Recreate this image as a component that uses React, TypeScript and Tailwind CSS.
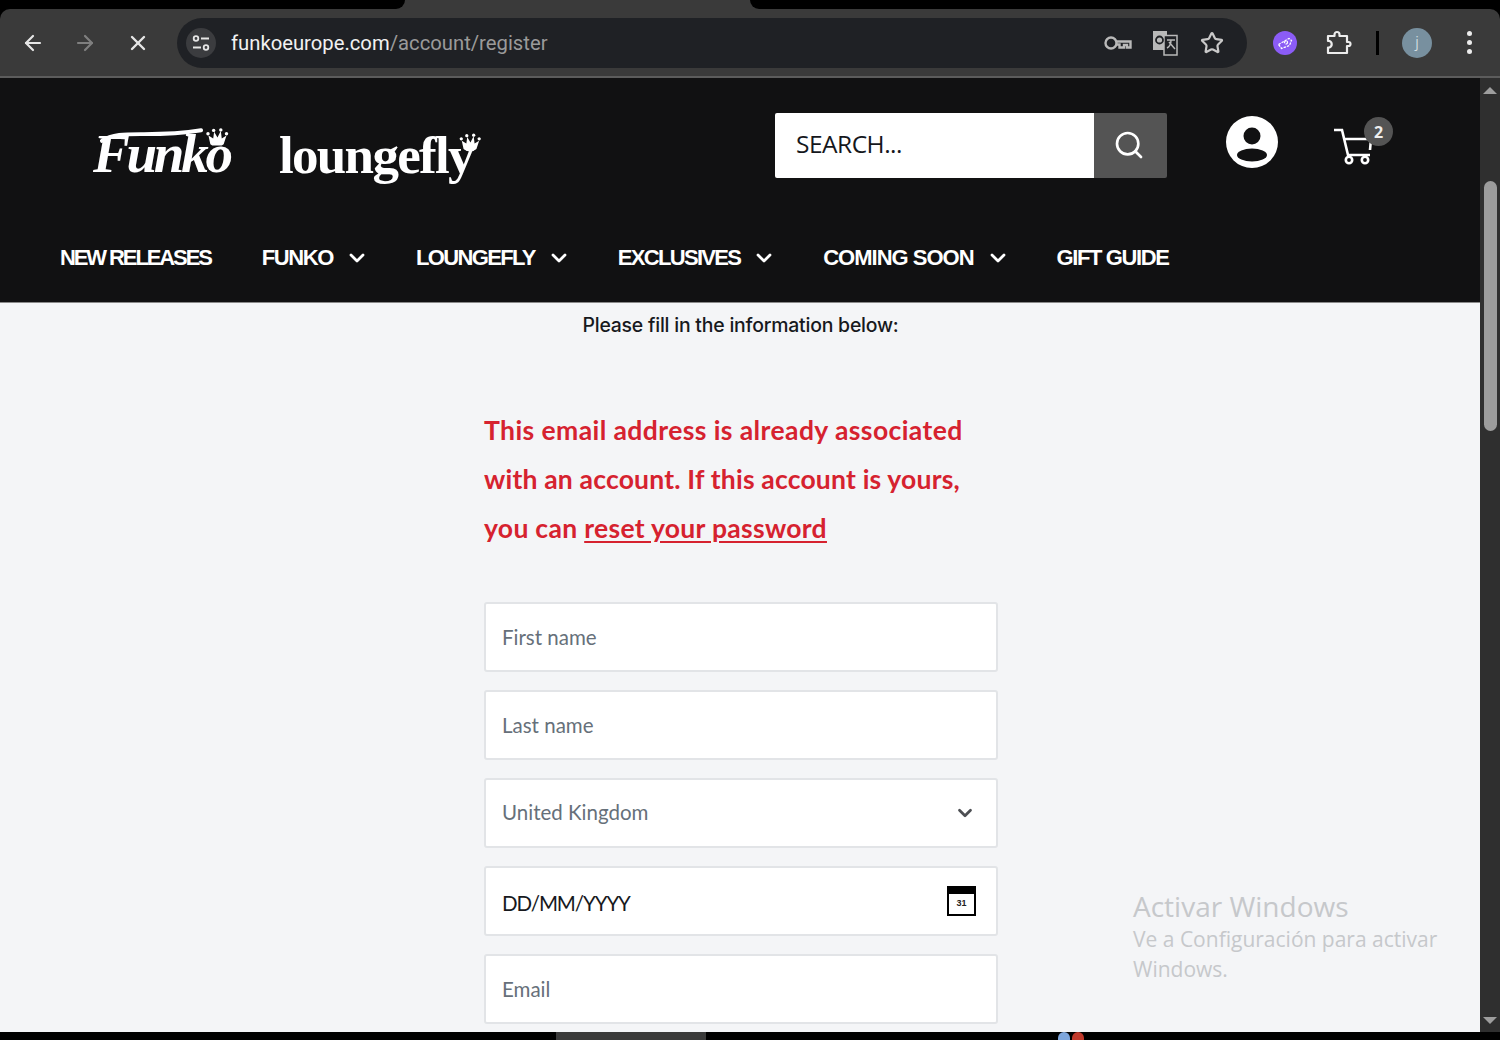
import { ArrowLeft, ArrowRight, ChevronDown, Search, Star, X } from 'lucide-react';

const NAV_ITEMS = [
  { label: 'NEW RELEASES', caret: false, tracking: 'tracking-[-2.1px]' },
  { label: 'FUNKO', caret: true, tracking: 'tracking-[-1.4px]' },
  { label: 'LOUNGEFLY', caret: true, tracking: 'tracking-[-1.65px]' },
  { label: 'EXCLUSIVES', caret: true, tracking: 'tracking-[-1.7px]' },
  { label: 'COMING SOON', caret: true, tracking: 'tracking-[-1px]' },
  { label: 'GIFT GUIDE', caret: false, tracking: 'tracking-[-1.4px]' },
];

function Crown({ className }: { className: string }) {
  return (
    <svg viewBox="0 0 24 20" className={className} fill="#fff">
      <path d="M3 8l5 3 1-7 3.5 6L16 3l1 8 5-3-3 9-2 1.500-10 0-2-1.500z" />
      <circle cx="2.500" cy="6" r="1.800" />
      <circle cx="8.500" cy="2.500" r="1.800" />
      <circle cx="16" cy="2" r="1.800" />
      <circle cx="22" cy="6" r="1.800" />
    </svg>
  );
}

function ChromeBar() {
  return (
    <div className="shrink-0">
      <div className="flex h-[9px] bg-[#3a3a3a]">
        <div className="w-[405px] rounded-br-[10px] bg-black" />
        <div className="flex-1" />
        <div className="w-[750px] rounded-bl-[10px] bg-black" />
      </div>
      <div className="flex h-[69px] items-center rounded-t-[10px] border-b-2 border-[#5c5c5c] bg-[#3a3a3a]">
        <ArrowLeft className="ml-[21px] h-[24px] w-[24px] text-[#e6e6e6]" strokeWidth={2.2} />
        <ArrowRight className="ml-[28px] h-[24px] w-[24px] text-[#7f7f7f]" strokeWidth={2.2} />
        <X className="ml-[29px] h-[24px] w-[24px] text-[#e6e6e6]" strokeWidth={2.4} />
        <div className="ml-[27px] flex h-[50px] w-[1070px] items-center rounded-full bg-[#1f2125] pl-[9px] pr-[23px]">
          <div className="flex h-[30px] w-[30px] items-center justify-center rounded-full bg-[#3b3c3f]">
            <svg viewBox="0 0 20 20" className="h-[20px] w-[20px]" fill="none" stroke="#e6e6e6" strokeWidth="1.800">
              <circle cx="5" cy="5.500" r="2.300" />
              <path d="M10 5.500h8M2 14.500h8" />
              <circle cx="15" cy="14.500" r="2.300" />
            </svg>
          </div>
          <div className="ml-[15px] mt-[2px] font-['Roboto',sans-serif] text-[20.250px] text-[#f1f1f1]">
            funkoeurope.com<span className="text-[#9a9a9a]">/account/register</span>
          </div>
          <div className="ml-auto flex items-center">
            <svg viewBox="0 0 28 16" className="h-[16px] w-[28px]" fill="none" stroke="#b9b9b9" strokeWidth="2.400">
              <circle cx="7" cy="8" r="5.500" />
              <path d="M12.500 6.500h14v6h-3.500v-2.500h-3v2.500h-4.500v-3h-3" />
            </svg>
            <svg viewBox="0 0 26 26" className="ml-[20px] h-[26px] w-[26px]">
              <rect x="1" y="1" width="14" height="19" fill="#b9b9b9" />
              <rect x="12" y="5.500" width="13" height="19.500" fill="#1f2125" stroke="#b9b9b9" strokeWidth="1.500" />
              <circle cx="7.500" cy="10" r="3.500" fill="none" stroke="#1f2125" strokeWidth="1.800" />
              <path d="M15 10h8M19 10c0 4-2 7-4 8M17 12l6 7" fill="none" stroke="#b9b9b9" strokeWidth="1.500" />
            </svg>
            <Star className="ml-[22px] h-[24px] w-[24px] text-[#c9c9c9]" strokeWidth={2.2} />
          </div>
        </div>
        <div className="ml-[26px] flex h-[24px] w-[24px] items-center justify-center rounded-full bg-[#8b5cf6]">
          <svg viewBox="0 0 16 16" className="h-[16px] w-[16px]" fill="none" stroke="#fff" strokeWidth="1.300" strokeDasharray="2.500 1">
            <path d="M1.500 9.500L12 3.500l2.500 2-2 5-8 3-3-4z" />
            <circle cx="9" cy="7.500" r="1.500" />
          </svg>
        </div>
        <svg viewBox="0 0 26 26" className="ml-[29px] h-[26px] w-[26px]" fill="none" stroke="#ececec" strokeWidth="2.200" strokeLinejoin="round">
          <path d="M2 6h6.500V4.500a2.500 2.500 0 0 1 5 0V6H21v6h1.500a1.800 1.800 0 0 1 0 4H21v7H2v-5.500h1.500a3.500 3.500 0 0 0 0-6.500H2z" />
        </svg>
        <div className="ml-[24px] h-[24px] w-[3px] bg-black" />
        <div className="ml-[23px] flex h-[30px] w-[30px] items-center justify-center rounded-full bg-[#78909f] font-['Roboto',sans-serif] text-[16px] font-light text-[#dfe6ea]">
          j
        </div>
        <div className="ml-[35px] flex flex-col gap-[4px]">
          <span className="h-[5px] w-[5px] rounded-full bg-[#ececec]" />
          <span className="h-[5px] w-[5px] rounded-full bg-[#ececec]" />
          <span className="h-[5px] w-[5px] rounded-full bg-[#ececec]" />
        </div>
      </div>
    </div>
  );
}

function SiteHeader() {
  return (
    <header className="h-[225px] shrink-0 border-b border-[#8a8a8a] bg-[#111112] pt-[35px]">
      <div className="flex h-[65px] items-start">
        <div className="relative ml-[93px] mt-[12px] w-[138px] font-['Liberation_Serif',serif] text-[55px] font-bold italic leading-[58px] tracking-[-3.200px] text-white">
          Funko
          <svg viewBox="0 0 110 20" className="absolute left-[6px] top-[2px] h-[20px] w-[106px]" fill="none" stroke="#fff" strokeWidth="4" strokeLinecap="round">
            <path d="M3 14C22 1 50 12 106 3" />
          </svg>
          <Crown className="absolute left-[111px] top-[3px] h-[19px] w-[26px]" />
        </div>
        <div className="relative ml-[48px] mt-[13px] w-[203px] font-['Liberation_Serif',serif] text-[53px] font-bold leading-[58px] tracking-[-1.700px] text-white">
          loungefly
          <Crown className="absolute left-[180px] top-[7px] h-[19px] w-[22px]" />
        </div>
        <div className="ml-[293px] flex h-[65px] w-[392px] overflow-hidden rounded-[2px]">
          <div className="flex flex-1 items-center bg-white pb-[3px] pl-[21px] font-['Open_Sans',sans-serif] text-[24.500px] font-medium tracking-[-0.5px] text-[#15171c]">
            SEARCH...
          </div>
          <div className="flex w-[73px] items-center justify-center bg-[#545454] pb-[2px] pr-[3px]">
            <Search className="h-[32px] w-[32px] text-white" strokeWidth={2} />
          </div>
        </div>
        <svg viewBox="0 0 52 52" className="ml-[59px] mt-[3px] h-[52px] w-[52px]">
          <circle cx="26" cy="26" r="26" fill="#fff" />
          <circle cx="26" cy="20" r="8.500" fill="#111112" />
          <ellipse cx="26" cy="39" rx="15" ry="6.500" fill="#111112" />
        </svg>
        <div className="relative ml-[55px] mt-[15px] h-[38px] w-[60px]">
          <svg viewBox="0 0 40 38" className="absolute left-0 top-0 h-[38px] w-[40px]" fill="none" stroke="#fff" strokeWidth="2.600">
            <path d="M1 2h8l6 25h22M11 11h27l-1 11" />
            <circle cx="16" cy="32" r="3.200" />
            <circle cx="32" cy="32" r="3.200" />
          </svg>
          <div className="absolute left-[31px] top-[-11px] flex h-[29px] w-[29px] items-center justify-center rounded-full bg-[#545454] font-['Open_Sans',sans-serif] text-[16px] font-bold text-[#eeeeee]">
            2
          </div>
        </div>
      </div>
      <nav className="mt-[62px] flex items-center gap-[51px] pl-[60px] font-['Liberation_Sans',sans-serif] text-[22px] font-bold leading-[36px] text-white">
        {NAV_ITEMS.map((item) => (
          <div key={item.label} className="flex items-center gap-[12px]">
            <span className={item.tracking}>{item.label}</span>
            {item.caret && <ChevronDown className="-mr-[4px] h-[24px] w-[24px]" strokeWidth={2.8} />}
          </div>
        ))}
      </nav>
    </header>
  );
}

function FieldBox({ children }: { children: React.ReactNode }) {
  return (
    <div className="flex h-[70px] shrink-0 items-center justify-between rounded-[3px] border-2 border-[#e2e4e7] bg-white pl-[16px] pr-[20px] font-['Lato',sans-serif] text-[20.500px] text-[#66707a]">
      {children}
    </div>
  );
}

function RegisterForm() {
  return (
    <main className="relative flex-1 overflow-hidden bg-[#f4f5f7]">
      <p className="flex h-[46px] items-center justify-center pl-[1px] font-['Inter',sans-serif] text-[19.400px] font-medium tracking-[-0.2px] text-[#17191d]">
        Please fill in the information below:
      </p>
      <div className="ml-[484px] mt-[57px] w-[514px]">
        <div className="font-['Lato',sans-serif] text-[26.500px] font-bold text-[#d6222f]">
          <p className="leading-[49px] tracking-[0.41px]">This email address is already associated</p>
          <p className="leading-[48px] tracking-[0.19px]">with an account. If this account is yours,</p>
          <p className="leading-[50px] tracking-[0.3px]">
            you can <span className="underline underline-offset-[3px]">reset your password</span>
          </p>
        </div>
        <div className="mt-[49px] flex flex-col gap-[18px]">
          <FieldBox>First name</FieldBox>
          <FieldBox>Last name</FieldBox>
          <FieldBox>
            <span className="-mt-[2px]">United Kingdom</span>
            <ChevronDown className="h-[22px] w-[22px] text-[#4d4f53]" strokeWidth={3} />
          </FieldBox>
          <FieldBox>
            <span className="mt-[4px] tracking-[-1.1px] text-[#17191d]">DD/MM/YYYY</span>
            <div className="flex h-[30px] w-[29px] flex-col border-2 border-black bg-white">
              <div className="h-[6px] bg-black" />
              <div className="flex flex-1 items-center justify-center font-['Liberation_Sans',sans-serif] text-[9px] font-bold text-[#222]">
                31
              </div>
            </div>
          </FieldBox>
          <FieldBox>Email</FieldBox>
        </div>
      </div>
      <div className="absolute left-[1133px] top-[585px] font-['Open_Sans',sans-serif] text-[#c6c8cb]">
        <div className="text-[28px] leading-[36px]">Activar Windows</div>
        <div className="w-[320px] text-[21px] leading-[30px]">Ve a Configuración para activar Windows.</div>
      </div>
    </main>
  );
}

function Scrollbar() {
  return (
    <div className="flex w-[20px] shrink-0 flex-col items-center bg-[#2f2f2f]">
      <div className="mt-[9px] h-0 w-0 border-x-[7px] border-b-[7px] border-x-transparent border-b-[#9e9e9e]" />
      <div className="mt-[87px] h-[250px] w-[13px] rounded-full bg-[#9c9c9c]" />
      <div className="mt-auto mb-[8px] h-0 w-0 border-x-[7px] border-t-[7px] border-x-transparent border-t-[#9e9e9e]" />
    </div>
  );
}

export default function App() {
  return (
    <div className="flex h-[1040px] w-[1500px] flex-col overflow-hidden bg-black">
      <ChromeBar />
      <div className="flex min-h-0 flex-1">
        <div className="flex min-w-0 flex-1 flex-col">
          <SiteHeader />
          <RegisterForm />
        </div>
        <Scrollbar />
      </div>
      <div className="flex h-[8px] shrink-0 bg-black pl-[556px]">
        <div className="w-[150px] bg-[#3a3a3a]" />
        <div className="ml-[352px] h-[8px] w-[12px] rounded-t-full bg-[#7ea6dc]" />
        <div className="ml-[2px] h-[8px] w-[12px] rounded-t-full bg-[#c0392b]" />
      </div>
    </div>
  );
}
